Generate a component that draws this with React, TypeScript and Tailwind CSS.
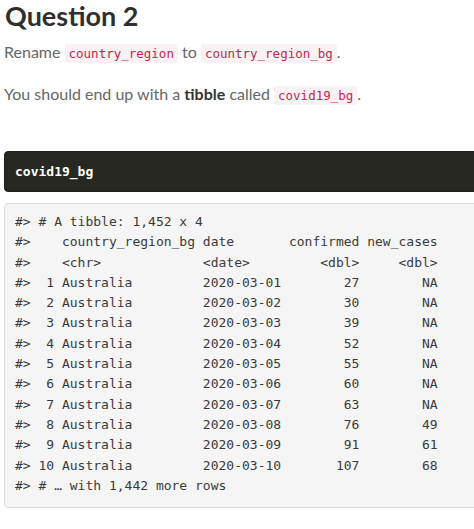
const lines = [
  "#> # A tibble: 1,452 x 4",
  "#>    country_region_bg date       confirmed new_cases",
  "#>    <chr>             <date>         <dbl>     <dbl>",
  "#>  1 Australia         2020-03-01        27        NA",
  "#>  2 Australia         2020-03-02        30        NA",
  "#>  3 Australia         2020-03-03        39        NA",
  "#>  4 Australia         2020-03-04        52        NA",
  "#>  5 Australia         2020-03-05        55        NA",
  "#>  6 Australia         2020-03-06        60        NA",
  "#>  7 Australia         2020-03-07        63        NA",
  "#>  8 Australia         2020-03-08        76        49",
  "#>  9 Australia         2020-03-09        91        61",
  "#> 10 Australia         2020-03-10       107        68",
  "#> # \u2026 with 1,442 more rows",
];

const mono = "font-['DejaVu_Sans_Mono','Liberation_Mono',monospace]";

function Code({ children }: { children: string }) {
  return (
    <code className={`${mono} text-[12.5px] bg-[#f9f2f4] text-[#c7254e] px-[4px] py-[2px] rounded-[3px]`}>
      {children}
    </code>
  );
}

export default function App() {
  return (
    <div className="w-[474px] h-[529px] overflow-hidden bg-white pl-[4px] font-['Lato','Open_Sans',sans-serif]">
      <h1 className="text-[27px] font-bold text-[#2f2f2f] leading-[32px] pl-[1px]">Question 2</h1>

      <p className="text-[16px] text-[#666] leading-[22px] mt-[9px]">
        Rename <Code>country_region</Code> to <Code>country_region_bg</Code>.
      </p>

      <p className="text-[16px] text-[#666] leading-[22px] mt-[18px]">
        You should end up with a <b className="font-bold text-[#333]">tibble</b> called <Code>covid19_bg</Code>.
      </p>

      <div className={`mt-[44px] w-[480px] bg-[#272822] rounded-[4px] border border-[#1e1e1a] px-[10px] py-[9px] ${mono} text-[13px] leading-[21px] font-bold text-white`}>
        covid19_bg
      </div>

      <pre className={`mt-[11px] w-[480px] bg-[#f5f5f5] border border-[#dcdcdc] rounded-[4px] pl-[10px] pt-[8px] pb-[11px] ${mono} text-[13px] leading-[20.3px] text-[#3a3a3a]`}>
        {lines.join("\n")}
      </pre>
    </div>
  );
}
